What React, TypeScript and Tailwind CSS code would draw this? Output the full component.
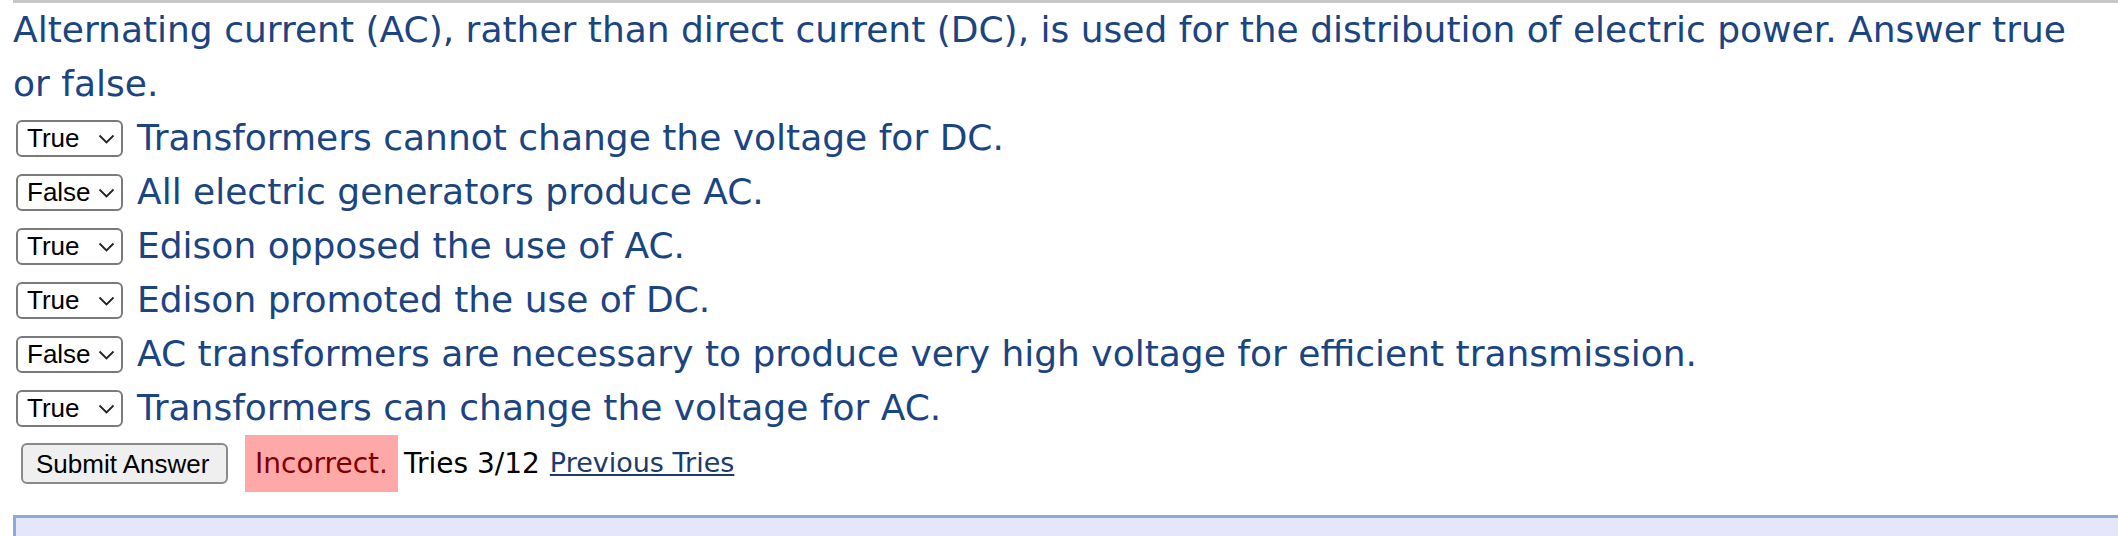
import React from 'react';

const questions: Array<{ value: 'True' | 'False'; text: string }> = [
  { value: 'True', text: 'Transformers cannot change the voltage for DC.' },
  { value: 'False', text: 'All electric generators produce AC.' },
  { value: 'True', text: 'Edison opposed the use of AC.' },
  { value: 'True', text: 'Edison promoted the use of DC.' },
  { value: 'False', text: 'AC transformers are necessary to produce very high voltage for efficient transmission.' },
  { value: 'True', text: 'Transformers can change the voltage for AC.' },
];

function TFSelect({ value }: { value: string }) {
  return (
    <div className="relative ml-[3px] mr-[14px] h-[37px] w-[107px] shrink-0">
      <select
        defaultValue={value}
        className="h-full w-full appearance-none rounded-[6px] border-2 border-[#7a7a7a] bg-white pl-[9px] font-['Liberation_Sans',Arial,sans-serif] text-[26px] leading-none text-black"
      >
        <option value="True">True</option>
        <option value="False">False</option>
      </select>
      <svg
        className="pointer-events-none absolute right-[8px] top-[14px] h-[10px] w-[17px]"
        viewBox="0 0 17 10"
        fill="none"
        stroke="#222"
        strokeWidth="1.8"
      >
        <path d="M1.5 1.5 L8.5 8.5 L15.5 1.5" />
      </svg>
    </div>
  );
}

export default function App() {
  return (
    <div className="h-[536px] w-[2118px] overflow-hidden bg-white pl-[13px] font-['DejaVu_Sans',Verdana,sans-serif]">
      <div className="border-t-[3px] border-[#c8c8c8]">
        {/* Question stem */}
        <p className="pr-[20px] text-[36px] leading-[54px] text-[#1b4482]">
          Alternating current (AC), rather than direct current (DC), is used for the distribution of electric power. Answer true or false.
        </p>

        {/* True / false rows */}
        {questions.map((q, idx) => (
          <div key={idx} className="flex h-[54px] items-center">
            <TFSelect value={q.value} />
            <span className="whitespace-nowrap text-[36px] leading-[54px] text-[#1b4482]">{q.text}</span>
          </div>
        ))}

        {/* Submit row */}
        <div className="flex h-[57px] items-center">
          <button className="ml-[8px] h-[41px] w-[207px] rounded-[6px] border-2 border-[#8a8a8a] bg-[#efefef] pl-[13px] text-left font-['Liberation_Sans',Arial,sans-serif] text-[26px] leading-none text-black">
            Submit Answer
          </button>
          <span className="ml-[17px] flex h-[57px] items-center bg-[#ffa8a8] px-[10px] text-[28px] text-[#7d0000]">
            Incorrect.
          </span>
          <span className="ml-[6px] text-[28px] text-black">Tries 3/12</span>
          <a href="#" className="ml-[10px] text-[27px] text-[#1c3a6b] underline">
            Previous Tries
          </a>
        </div>

        {/* Next part box */}
        <div className="mt-[23px] h-[40px] border-l-[3px] border-t-[3px] border-[#8fa9db] bg-[#e6e6fa]" />
      </div>
    </div>
  );
}
